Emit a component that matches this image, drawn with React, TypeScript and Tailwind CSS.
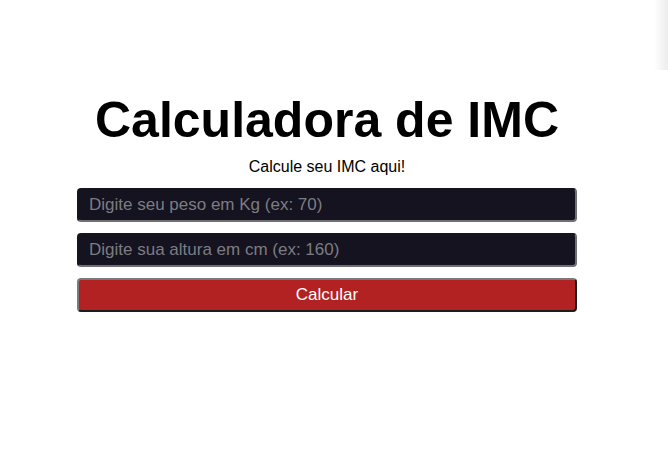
import React, { useState } from "react";

const App = () => {
  const [peso, setPeso] = useState("");
  const [altura, setAltura] = useState("");

  return (
    <div className="min-h-screen w-full bg-white font-['Liberation_Sans',Arial,sans-serif] relative overflow-hidden">
      <div className="w-[654px] flex flex-col items-center pt-[89px]">
        <h1 className="text-[50px] leading-[62px] font-bold text-black">Calculadora de IMC</h1>
        <p className="text-base leading-5 text-black mt-[6px]">Calcule seu IMC aqui!</p>
        <div className="w-[500px] flex flex-col gap-[11px] mt-[11px]">
          <input
            type="number"
            value={peso}
            onChange={(e) => setPeso(e.target.value)}
            placeholder="Digite seu peso em Kg (ex: 70)"
            className="h-[34px] w-full rounded-[4px] border-2 border-t-[#16151f] border-l-[#16151f] border-b-[#6f6f74] border-r-[#6f6f74] bg-[#14131f] px-[10px] text-[17px] text-white placeholder:text-[#7d7c83] outline-none"
          />
          <input
            type="number"
            value={altura}
            onChange={(e) => setAltura(e.target.value)}
            placeholder="Digite sua altura em cm (ex: 160)"
            className="h-[34px] w-full rounded-[4px] border-2 border-t-[#16151f] border-l-[#16151f] border-b-[#6f6f74] border-r-[#6f6f74] bg-[#14131f] px-[10px] text-[17px] text-white placeholder:text-[#7d7c83] outline-none"
          />
          <button className="h-[34px] w-full rounded-[4px] border-2 border-t-[#7a7a7a] border-l-[#7a7a7a] border-b-[#1c1c1c] border-r-[#1c1c1c] bg-[#b22222] text-[17px] text-white">
            Calcular
          </button>
        </div>
      </div>
      {/* soft edge shading along the right side */}
      <div className="pointer-events-none absolute right-0 top-0 h-[70px] w-[14px] bg-gradient-to-r from-transparent to-[#ececec]" />
    </div>
  );
};

export default App;
